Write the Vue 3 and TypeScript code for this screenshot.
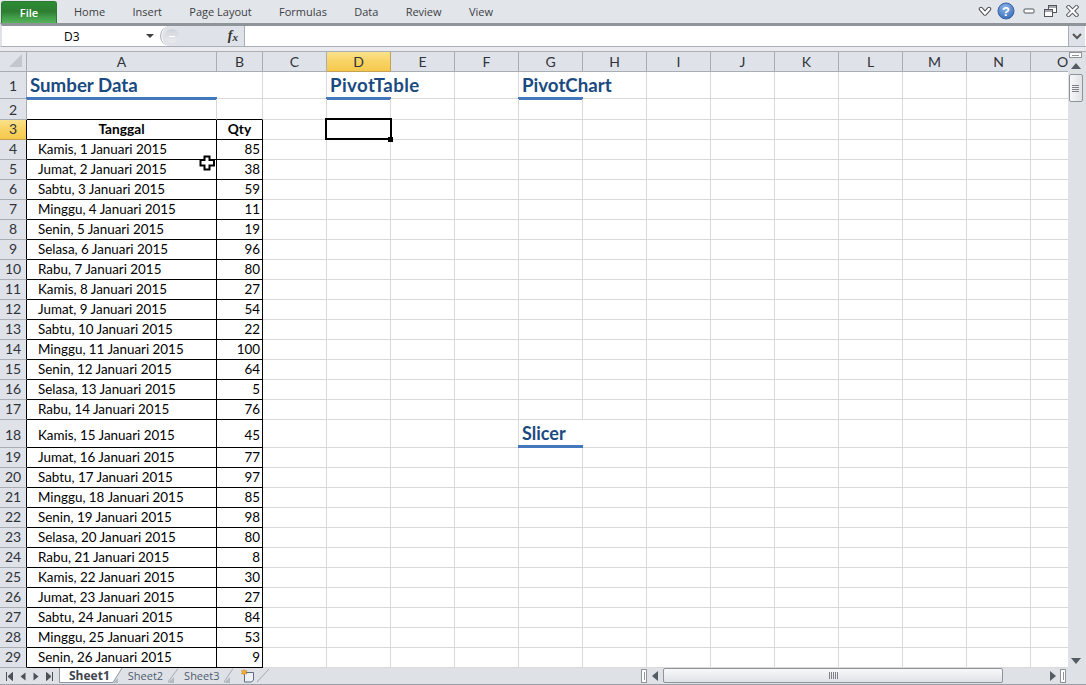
<script setup lang="ts">
const letters = 'ABCDEFGHIJKLMNO'.split('')
const days = ['Kamis', 'Jumat', 'Sabtu', 'Minggu', 'Senin', 'Selasa', 'Rabu']
const qty = [85, 38, 59, 11, 19, 96, 80, 27, 54, 22, 100, 64, 5, 76, 45, 77, 97, 85, 98, 80, 8, 30, 27, 84, 53, 9]
const rows = qty.map((q, i) => ({
  n: i + 4,
  date: `${days[i % 7]}, ${i + 1} Januari 2015`,
  q,
  tall: i + 4 === 18,
}))
const blank = letters.slice(2)
const tabs = ['Home', 'Insert', 'Page Layout', 'Formulas', 'Data', 'Review', 'View']
</script>

<template>
  <div class="app">
    <header class="ribbon">
      <div class="file">File</div>
      <nav class="tabs">
        <span v-for="t in tabs" :key="t">{{ t }}</span>
      </nav>
      <div class="controls">
        <svg class="ic-heart" width="14" height="12" viewBox="0 0 14 12">
          <path d="M3 4 L7 8.5 L11 4" fill="none" stroke="#50555c" stroke-width="4.4" stroke-linejoin="round" stroke-linecap="round" />
          <path d="M3 4 L7 8.5 L11 4" fill="none" stroke="#fff" stroke-width="2.4" stroke-linecap="round" />
        </svg>
        <svg class="ic-help" width="18" height="18" viewBox="0 0 18 18"><defs><radialGradient id="hb" cx="0.45" cy="0.3" r="0.8"><stop offset="0" stop-color="#8fb8ec" /><stop offset="1" stop-color="#2f62b0" /></radialGradient></defs><circle cx="9" cy="9" r="8" fill="url(#hb)" stroke="#3a66a8" /><text x="9" y="13.6" text-anchor="middle" class="q">?</text></svg>
        <svg class="ic-min" width="12" height="8" viewBox="0 0 12 8"><rect x="1" y="2" width="10" height="4" rx="1" fill="#fff" stroke="#50555c" /></svg>
        <svg class="ic-max" width="13" height="12" viewBox="0 0 13 12"><rect x="4.5" y="0.5" width="8" height="7" fill="#fff" stroke="#50555c" /><rect x="0.5" y="4.5" width="8" height="7" fill="#fff" stroke="#50555c" /><path d="M5 2h7M1 6h7" stroke="#50555c" /></svg>
        <svg class="ic-close" width="13" height="12" viewBox="0 0 13 12">
          <path d="M2.5 2 L10.5 10 M10.5 2 L2.5 10" fill="none" stroke="#50555c" stroke-width="4" stroke-linecap="square" />
          <path d="M2.5 2 L10.5 10 M10.5 2 L2.5 10" fill="none" stroke="#fff" stroke-width="2.2" stroke-linecap="square" />
        </svg>
      </div>
    </header>

    <section class="formula">
      <div class="namebox">
        <span class="nm">D3</span>
        <i class="caret"></i>
      </div>
      <div class="fxzone">
        <span class="round"><i></i></span>
        <em class="fx">f<sub>x</sub></em>
      </div>
      <div class="input"></div>
      <div class="expand">
        <svg width="10" height="8" viewBox="0 0 10 8"><path d="M1 2 L5 6 L9 2" fill="none" stroke="#555" stroke-width="2" /></svg>
      </div>
    </section>
    <div class="gap"></div>

    <section class="middle">
      <div class="sheet">
        <div class="grid">
          <div class="corner"><i></i></div>
          <div v-for="l in letters" :key="l" class="ch" :class="{ on: l === 'D' }">{{ l }}</div>

          <div class="rh h1">1</div>
          <div class="c title">Sumber Data</div>
          <div class="c"></div>
          <div class="c"></div>
          <div class="c title wide">PivotTable</div>
          <div class="c"></div>
          <div class="c"></div>
          <div class="c title">PivotChart</div>
          <div v-for="l in letters.slice(7)" :key="'r1' + l" class="c"></div>

          <div class="rh">2</div>
          <div class="c bb"></div>
          <div class="c bb"></div>
          <div v-for="l in blank" :key="'r2' + l" class="c"></div>

          <div class="rh on bl up">3</div>
          <div class="c cell up head br bb">Tanggal</div>
          <div class="c cell up head br bb">Qty</div>
          <div class="c"></div>
          <div class="c active"><u class="sel"></u><b class="handle"></b></div>
          <div v-for="l in letters.slice(4)" :key="'r3' + l" class="c"></div>

          <template v-for="r in rows" :key="r.n">
            <div class="rh bl" :class="r.tall ? 'down' : 'up'">{{ r.n }}</div>
            <div class="c cell date br bb" :class="r.tall ? 'down' : 'up'">{{ r.date }}</div>
            <div class="c cell num br bb" :class="r.tall ? 'down' : 'up'">{{ r.q }}</div>
            <template v-for="l in blank" :key="r.n + l">
              <div v-if="r.tall && l === 'G'" class="c title slicer">Slicer</div>
              <div v-else class="c"></div>
            </template>
          </template>
        </div>

        <svg class="cursor" width="17" height="17" viewBox="0 0 17 17">
          <path d="M5.5 1.5 H10.5 V5 H15 V10.5 H10.5 V14.5 H5.5 V10.5 H1.5 V5 H5.5 Z" fill="#fff" stroke="#000" stroke-width="2" />
        </svg>
      </div>

      <aside class="vscroll">
        <div class="split-h"><i></i></div>
        <svg class="arrow-up" width="10" height="6" viewBox="0 0 10 6"><path d="M5 0 L10 6 H0 Z" fill="#555b63" /></svg>
        <div class="vthumb">
          <i></i><i></i><i></i><i></i>
        </div>
        <div class="vspace"></div>
        <svg class="arrow-down" width="10" height="6" viewBox="0 0 10 6"><path d="M5 6 L10 0 H0 Z" fill="#555b63" /></svg>
      </aside>
    </section>

    <footer class="bottom">
      <div class="strip">
        <svg class="shapes" width="290" height="16" viewBox="0 0 290 16">
          <path d="M60 0 H122 L113 14.5 H60 Z" fill="#fff" />
          <path d="M59.5 0 V14.5 H113 L122 0" fill="none" stroke="#8d96a2" />
          <path d="M168 14 L178 0.5 M224 14 L233 0.5 M257 14 L269 1" fill="none" stroke="#a2a9b3" />
          <path d="M113 15 L118 15 L118 10 Z M168 15 L174 15 L174 9 Z M224 15 L230 15 L230 9 Z" fill="#b4bac2" />
        </svg>
        <div class="nav">
          <svg width="7" height="9" viewBox="0 0 7 9"><path d="M0.5 0V9M6.5 0.5V8.5L2 4.5Z" fill="#4c5158" stroke="#4c5158" stroke-width="1" /></svg>
          <svg width="6" height="9" viewBox="0 0 6 9"><path d="M5.5 0.5V8.5L0.5 4.5Z" fill="#4c5158" /></svg>
          <svg width="6" height="9" viewBox="0 0 6 9"><path d="M0.5 0.5V8.5L5.5 4.5Z" fill="#4c5158" /></svg>
          <svg width="7" height="9" viewBox="0 0 7 9"><path d="M6.5 0V9M0.5 0.5V8.5L5 4.5Z" fill="#4c5158" stroke="#4c5158" stroke-width="1" /></svg>
        </div>
        <span class="tab cur">Sheet1</span>
        <span class="tab s2">Sheet2</span>
        <span class="tab s3">Sheet3</span>
        <svg class="newsheet" width="14" height="14" viewBox="0 0 14 14">
          <path d="M3.5 3.5 H12.5 V11 L10.5 13 H3.5 Z" fill="#eef1f5" stroke="#5e6b80" />
          <path d="M3 0.5 L4 2 L6 1.5 L5 3.2 L6 5 L4 4.5 L3 6 L2 4.5 L0.5 5 L1.3 3.2 L0.5 1.5 L2 2 Z" fill="#f2b233" stroke="#c47d12" stroke-width="0.5" />
        </svg>
        <div class="stripfill"></div>
      </div>
      <div class="hscroll">
        <div class="split-v"><i></i></div>
        <svg class="ha" width="6" height="10" viewBox="0 0 6 10"><path d="M0 5 L6 0 V10 Z" fill="#555b63" /></svg>
        <div class="hthumb"><i></i><i></i><i></i><i></i><i></i></div>
        <svg class="hb" width="6" height="10" viewBox="0 0 6 10"><path d="M6 5 L0 0 V10 Z" fill="#555b63" /></svg>
        <div class="split-v end"><i></i></div>
      </div>
      <div class="sizer"></div>
    </footer>
  </div>
</template>

<style>
html, body { margin: 0; padding: 0; background: #fff; }
</style>

<style scoped>
.app {
  width: 1086px;
  height: 685px;
  display: flex;
  flex-direction: column;
  overflow: hidden;
  background: #dee2e7;
  font-family: "Lato", "Liberation Sans", sans-serif;
  color: #000;
}
.ribbon {
  height: 23px;
  flex: none;
  display: flex;
  background: #e2e5e9;
}
.file {
  width: 56px;
  height: 22px;
  margin: 1px 0 0 1px;
  box-sizing: border-box;
  border: 1px solid #2f7a33;
  border-bottom: 0;
  border-radius: 3px 3px 0 0;
  background: linear-gradient(#2c8b34, #2e7d32 45%, #3f9a47 70%, #58b35b);
  color: #fff;
  font: 600 11px/21px "Open Sans", sans-serif;
  text-align: center;
}
.tabs {
  display: flex;
  gap: 27.3px;
  margin-left: 17px;
  font: 11px/24px "Open Sans", sans-serif;
  color: #3c3f44;
}
.controls {
  margin-left: auto;
  display: flex;
  align-items: center;
  padding-right: 7px;
  height: 22px;
}
.ic-help { margin-left: 5px; }
.ic-min { margin-left: 8px; }
.ic-max { margin-left: 9px; }
.ic-close { margin-left: 9px; }
.q { font: 700 13px "Liberation Sans", sans-serif; fill: #fff; }
.formula {
  height: 24px;
  flex: none;
  box-sizing: border-box;
  display: flex;
  background: #fff;
  border-top: 3px solid #8f9499;
  border-bottom: 1px solid #a9aeb4;
  border-left: 2px solid #dfe2e8;
}
.namebox {
  width: 158px;
  display: flex;
  align-items: center;
  position: relative;
  font: 12px "Open Sans", sans-serif;
}
.nm { margin-left: 62px; }
.caret {
  position: absolute;
  left: 144px;
  top: 8px;
  border: 4px solid transparent;
  border-top: 4px solid #3f3f3f;
  border-bottom: 0;
}
.fxzone {
  width: 85px;
  background: #dfe2e8;
  display: flex;
  align-items: center;
  justify-content: space-between;
  border-radius: 10px 0 0 10px;
  border-left: 1px solid #a9aeb4;
  border-right: 1px solid #a9aeb4;
  box-sizing: border-box;
  box-shadow: inset 1px 0 0 #fff;
}
.round {
  width: 14px;
  height: 14px;
  margin-left: 4px;
  border-radius: 50%;
  background: linear-gradient(#cfd3d9, #e9ebee);
  display: flex;
  align-items: center;
  justify-content: center;
}
.round i { width: 6px; height: 1px; background: #fff; }
.fx {
  margin-right: 6px;
  font: italic 700 14px/1 "Liberation Serif", serif;
  color: #333;
}
.fx sub { font-size: 11px; vertical-align: -1px; line-height: 0; }
.input { flex: 1; }
.expand {
  width: 16px;
  margin-right: 1px;
  background: #dfe2e8;
  border-left: 1px solid #a9aeb4;
  display: flex;
  align-items: center;
  justify-content: center;
}
.gap {
  height: 4px;
  flex: none;
  background: #e9ebee;
  border-bottom: 1px solid #a9aeb4;
}
.middle {
  flex: 1;
  min-height: 0;
  display: flex;
}
.sheet {
  flex: 1;
  min-width: 0;
  position: relative;
  overflow: hidden;
  background: #fff;
}
.grid {
  display: grid;
  grid-template-columns: 27px 190px 46px repeat(13, 64px);
  grid-template-rows: 20px 27px 21px 20px repeat(14, 20px) 28px repeat(11, 20px);
  width: 1095px;
}
.corner {
  background: #dfe2e8;
  border-right: 1px solid #a9aeb4;
  border-bottom: 1px solid #a9aeb4;
  position: relative;
}
.corner i {
  position: absolute;
  right: 4px;
  bottom: 4px;
  width: 0;
  height: 0;
  border-left: 13px solid transparent;
  border-bottom: 13px solid #c3c7cd;
}
.ch, .rh {
  background: #dfe2e8;
  display: flex;
  align-items: center;
  justify-content: center;
  font-size: 14px;
  color: #30343a;
  box-sizing: border-box;
  border-right: 1px solid #a9aeb4;
  border-bottom: 1px solid #a9aeb4;
}
.ch { overflow: hidden; }
.ch.on, .rh.on {
  background: linear-gradient(#f9e28c, #f8d466 45%, #f6c94d);
  border-color: #c3a052;
}
.rh.bl { border-right-color: #000; }
.up { padding-bottom: 2px; }
.down { padding-top: 2px; }
.c {
  box-sizing: border-box;
  border-right: 1px solid #d9d9d9;
  border-bottom: 1px solid #d9d9d9;
  min-width: 0;
  white-space: nowrap;
}
.bb { border-bottom-color: #000; }
.br { border-right-color: #000; }
.title {
  box-sizing: border-box;
  margin: 0 0 -1px -1px;
  padding-left: 4px;
  border-right: 0;
  border-bottom: 3px solid #4478bc;
  color: #1a4a80;
  font: 700 18.7px/24px "Lato", sans-serif;
  display: flex;
  align-items: flex-end;
}
.wide { letter-spacing: 0.4px; }
.slicer { font-size: 18px; margin-bottom: 0; }
.cell {
  font-size: 13.4px;
  display: flex;
  align-items: center;
}
.head { justify-content: center; font-weight: 700; font-size: 13.7px; }
.date { padding-left: 11px; }
.num { justify-content: flex-end; padding-right: 2px; }
.active { position: relative; z-index: 1; }
.sel {
  position: absolute;
  left: -2px;
  top: -2px;
  right: -2px;
  bottom: -1px;
  border: 2px solid #000;
}
.handle {
  position: absolute;
  right: -3px;
  bottom: -3px;
  width: 5px;
  height: 5px;
  background: #000;
}
.cursor {
  position: absolute;
  left: 199px;
  top: 103px;
}
.vscroll {
  width: 18px;
  flex: none;
  box-sizing: border-box;
  padding-right: 3px;
  background: #dee2e7;
  display: flex;
  flex-direction: column;
  align-items: center;
}
.split-h {
  width: 13px;
  height: 6px;
  background: #fff;
  border: 1px solid #8f9499;
  box-sizing: border-box;
  display: flex;
  align-items: center;
  justify-content: center;
}
.split-h i { width: 7px; height: 1px; background: #8f9499; }
.arrow-up { margin-top: 5px; }
.arrow-down { margin-bottom: 4px; }
.vthumb {
  width: 14px;
  height: 28px;
  margin-top: 5px;
  box-sizing: border-box;
  border: 1px solid #8f9499;
  border-radius: 2px;
  background: linear-gradient(90deg, #f7f8f9, #dfe2e7);
  display: flex;
  flex-direction: column;
  align-items: center;
  justify-content: center;
  gap: 1px;
}
.vthumb i { width: 7px; height: 1px; background: #7d8187; }
.vspace { flex: 1; }
.bottom {
  height: 17px;
  flex: none;
  display: flex;
  background: #dee2e7;
  border-bottom: 1px solid #9a9fa5;
  box-sizing: border-box;
}
.strip {
  width: 641px;
  flex: none;
  position: relative;
  display: flex;
  height: 16px;
  font: 11px/16px "Open Sans", sans-serif;
  color: #4f5b6e;
}
.shapes { position: absolute; left: 0; top: 0; }
.nav {
  width: 60px;
  flex: none;
  display: flex;
  align-items: center;
  gap: 7px;
  padding-left: 6px;
  box-sizing: border-box;
  position: relative;
}
.tab { position: relative; }
.tab.cur { font-size: 12px; font-weight: 700; color: #3f4650; margin-left: 9px; }
.tab.s2 { margin-left: 18px; }
.tab.s3 { margin-left: 21px; }
.newsheet { position: relative; margin: 1px 0 0 22px; }
.stripfill { flex: 1; }
.hscroll {
  flex: 1;
  display: flex;
  align-items: flex-start;
  height: 16px;
}
.split-v {
  width: 6px;
  height: 14px;
  margin-top: 1px;
  background: #fff;
  border: 1px solid #8f9499;
  box-sizing: border-box;
  display: flex;
  align-items: center;
  justify-content: center;
}
.split-v i { width: 1px; height: 8px; background: #8f9499; }
.ha { margin: 3px 0 0 5px; }
.hb { margin: 3px 0 0 47px; }
.split-v.end { margin-left: 4px; }
.hthumb {
  width: 340px;
  height: 15px;
  margin-left: 5px;
  box-sizing: border-box;
  border: 1px solid #8f9499;
  border-radius: 2px;
  background: linear-gradient(#f7f8f9, #dfe2e7);
  display: flex;
  align-items: center;
  justify-content: center;
  gap: 1px;
}
.hthumb i { width: 1px; height: 7px; background: #7d8187; }
.sizer { width: 18px; flex: none; }
</style>
